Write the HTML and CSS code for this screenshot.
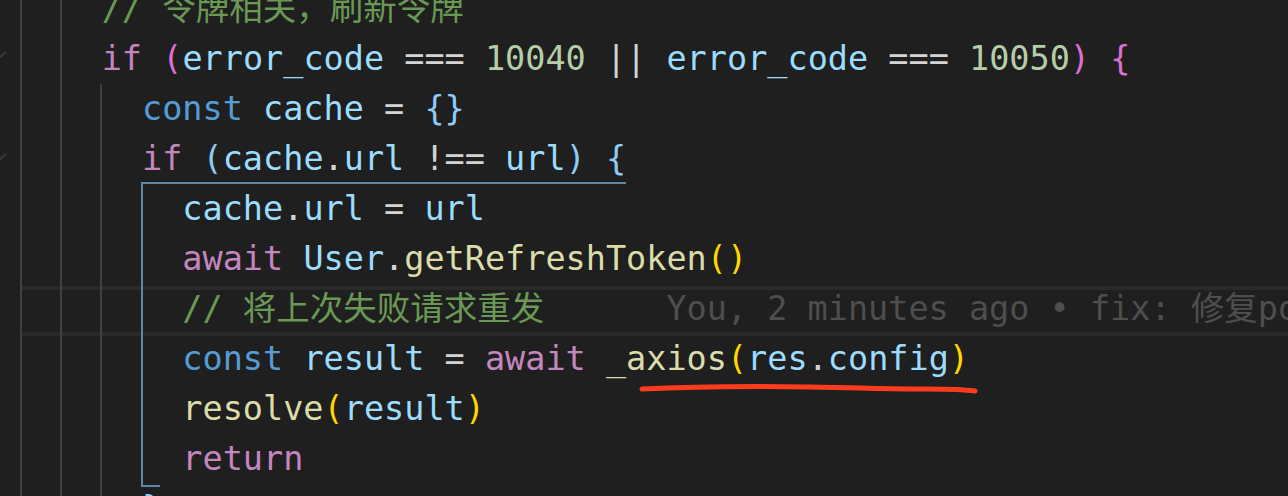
FILE: index.html
```html
<!DOCTYPE html>
<html lang="zh-CN">
<head>
    <meta charset="UTF-8">
    <meta name="viewport" content="width=device-width, initial-scale=1.0">
    <title>request.js</title>
    <link rel="stylesheet" href="styles.css">
</head>
<body>
    <div class="editor">
        <!-- indent guides and bracket pair guide -->
        <div class="guide g0"></div>
        <div class="guide g1"></div>
        <div class="guide g2"></div>
        <div class="pair pair-v"></div>
        <div class="pair pair-top"></div>
        <div class="pair pair-bottom"></div>

        <!-- cut-off folding chevrons -->
        <div class="fold fold-1"></div>
        <div class="fold fold-3"></div>

        <div class="code">
            <div class="line"><span class="cm">    // 令牌相关，刷新令牌</span></div>
            <div class="line">    <span class="kw">if</span> <span class="b2">(</span><span class="var">error_code</span> <span class="op">===</span> <span class="num">10040</span> <span class="op">||</span> <span class="var">error_code</span> <span class="op">===</span> <span class="num">10050</span><span class="b2">)</span> <span class="b2">{</span></div>
            <div class="line">      <span class="st">const</span> <span class="var">cache</span> <span class="op">=</span> <span class="b3">{}</span></div>
            <div class="line">      <span class="kw">if</span> <span class="b3">(</span><span class="var">cache</span><span class="op">.</span><span class="var">url</span> <span class="op">!==</span> <span class="var">url</span><span class="b3">)</span> <span class="b3">{</span></div>
            <div class="line">        <span class="var">cache</span><span class="op">.</span><span class="var">url</span> <span class="op">=</span> <span class="var">url</span></div>
            <div class="line">        <span class="kw">await</span> <span class="var">User</span><span class="op">.</span><span class="fn">getRefreshToken</span><span class="b1">()</span></div>
            <div class="line current"><span class="cm">        // 将上次失败请求重发</span><span class="blame">You, 2 minutes ago • fix: 修复post请求重发问题</span></div>
            <div class="line">        <span class="st">const</span> <span class="var">result</span> <span class="op">=</span> <span class="kw">await</span> <span class="fn">_axios</span><span class="b1">(</span><span class="var">res</span><span class="op">.</span><span class="var">config</span><span class="b1">)</span></div>
            <div class="line">        <span class="fn">resolve</span><span class="b1">(</span><span class="var">result</span><span class="b1">)</span></div>
            <div class="line">        <span class="kw">return</span></div>
            <div class="line">      <span class="b3">}</span></div>
        </div>

        <svg class="mark" width="1288" height="496" viewBox="0 0 1288 496">
            <path d="M642 389 C 700 386, 790 386, 860 388 S 950 388, 975 391" fill="none" stroke="#ff3b1f" stroke-width="5" stroke-linecap="round"/>
        </svg>
    </div>
</body>
</html>
```

FILE: styles.css
```css
body {
    margin: 0;
    background-color: #1f1f1f;
    overflow: hidden;
}
.editor {
    position: relative;
    height: 496px;
    overflow: hidden;
    font-family: "DejaVu Sans Mono", "Noto Sans CJK SC", monospace;
    font-size: 33.5px;
    color: #d4d4d4;
}
.code {
    margin-top: -14px;
    margin-left: 21px;
}
.line {
    height: 50px;
    line-height: 46px;
    white-space: pre;
    box-sizing: border-box;
}
.line.current {
    border-top: 4px solid #2a2a2a;
    border-bottom: 4px solid #2a2a2a;
    line-height: 38px;
}

/* syntax colours */
.cm { color: #6a9955; }
.kw { color: #c586c0; }
.st { color: #569cd6; }
.var { color: #9cdcfe; }
.op { color: #d4d4d4; }
.num { color: #b5cea8; }
.fn { color: #dcdcaa; }
.b1 { color: #ffd700; }
.b2 { color: #da70d6; }
.b3 { color: #8ecbf7; }
.blame {
    color: #4e4e4e;
    margin-left: 122px;
}

/* guides */
.guide {
    position: absolute;
    width: 2px;
    bottom: 0;
    background-color: #404040;
    z-index: 1;
}
.g0 { left: 20px; top: 0; }
.g1 { left: 60px; top: 0; }
.g2 { left: 100px; top: 84px; }
.pair {
    position: absolute;
    background-color: #5f87a6;
    z-index: 1;
}
.pair-v {
    left: 141px;
    top: 182px;
    width: 2px;
    height: 305px;
}
.pair-top {
    left: 141px;
    top: 182px;
    width: 485px;
    height: 2px;
}
.pair-bottom {
    left: 141px;
    top: 485px;
    width: 19px;
    height: 2px;
}
.fold {
    position: absolute;
    left: -2px;
    width: 9px;
    height: 2px;
    background-color: #3a3a3a;
    transform: rotate(-40deg);
}
.fold-1 { top: 54px; }
.fold-3 { top: 156px; }
.mark {
    position: absolute;
    left: 0;
    top: 0;
    z-index: 2;
    pointer-events: none;
}
```
